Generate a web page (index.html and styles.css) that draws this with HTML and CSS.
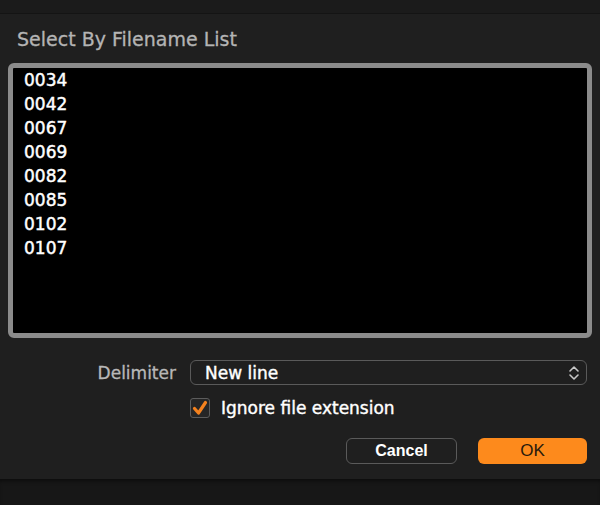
FILE: index.html
```html
<!DOCTYPE html>
<html>
<head>
<meta charset="utf-8">
<link rel="stylesheet" href="styles.css">
</head>
<body>
<div class="topbar"></div>
<div class="dialog">
  <div class="title">Select By Filename List</div>
  <div class="listbox">
    <div class="list">0034
0042
0067
0069
0082
0085
0102
0107</div>
  </div>
  <div class="form">
    <div class="row">
      <div class="label">Delimiter</div>
      <div class="select">
        <span>New line</span>
        <svg class="chev" width="12" height="20" viewBox="0 0 12 20">
          <path d="M2 8 L6 4 L10 8" fill="none" stroke="#c8c8c8" stroke-width="1.6" stroke-linecap="round" stroke-linejoin="round"/>
          <path d="M2 12 L6 16 L10 12" fill="none" stroke="#c8c8c8" stroke-width="1.6" stroke-linecap="round" stroke-linejoin="round"/>
        </svg>
      </div>
    </div>
    <div class="row">
      <div class="label"></div>
      <div class="check">
        <span class="box">
          <svg width="20" height="20" viewBox="0 0 20 20">
            <path d="M4.5 10.5 L8.5 15 L15.5 4.5" fill="none" stroke="#f5821e" stroke-width="3.2" stroke-linecap="round" stroke-linejoin="round"/>
          </svg>
        </span>
        <span class="check-label">Ignore file extension</span>
      </div>
    </div>
    <div class="buttons">
      <div class="btn cancel">Cancel</div>
      <div class="btn ok">OK</div>
    </div>
  </div>
</div>
<div class="footer"></div>
</body>
</html>
```
FILE: styles.css
```css
html, body {
  margin: 0;
  padding: 0;
  background: #171717;
  width: 600px;
  height: 505px;
  overflow: hidden;
  font-family: "DejaVu Sans", "Liberation Sans", sans-serif;
}
.topbar {
  height: 13px;
  background: #1b1b1b;
  border-bottom: 1px solid #141414;
}
.dialog {
  height: 465px;
  background: #1f1f1f;
  padding: 0 8px 0 8px;
  box-sizing: border-box;
  display: flex;
  flex-direction: column;
}
.title {
  color: #b4b4b4;
  font-size: 19px;
  line-height: 22px;
  padding: 14px 0 0 9px;
  height: 49px;
  box-sizing: border-box;
  -webkit-text-stroke: 0.3px #b4b4b4;
}
.listbox {
  height: 275px;
  border: 5px solid #8b8b8b;
  border-radius: 6px;
  background: #000;
  box-sizing: border-box;
  padding: 0 0 0 11px;
}
.list {
  white-space: pre;
  color: #fff;
  font-size: 17px;
  line-height: 24px;
  padding-top: 0;
  -webkit-text-stroke: 0.45px #fff;
}
.form {
  display: flex;
  flex-direction: column;
  padding: 22px 5px 0 0;
}
.row {
  display: grid;
  grid-template-columns: 182px 1fr;
  align-items: center;
}
.row + .row {
  margin-top: 13px;
}
.label {
  color: #b8b8b8;
  font-size: 17px;
  text-align: right;
  padding-right: 14px;
  -webkit-text-stroke: 0.3px #b8b8b8;
}
.select {
  height: 25px;
  border: 1px solid #5a5a5a;
  border-radius: 6px;
  box-sizing: border-box;
  display: flex;
  align-items: center;
  justify-content: space-between;
  padding: 0 6px 0 14px;
  color: #fff;
  font-size: 17px;
  -webkit-text-stroke: 0.4px #fff;
}
.chev {
  display: block;
  -webkit-text-stroke: 0;
}
.check {
  display: flex;
  align-items: center;
  gap: 11px;
}
.box {
  width: 20px;
  height: 20px;
  border: 1px solid #5c5c5c;
  border-radius: 3px;
  box-sizing: border-box;
  background: #262626;
  display: flex;
  align-items: center;
  justify-content: center;
}
.box svg {
  display: block;
  margin: -1px;
}
.check-label {
  color: #fff;
  font-size: 17px;
  -webkit-text-stroke: 0.4px #fff;
}
.buttons {
  display: flex;
  justify-content: flex-end;
  gap: 21px;
  margin-top: 20px;
}
.btn {
  height: 26px;
  border-radius: 6px;
  box-sizing: border-box;
  display: flex;
  align-items: center;
  justify-content: center;
  font-size: 15px;
}
.cancel {
  width: 111px;
  border: 1.5px solid #5a5a5a;
  color: #fff;
  font-weight: bold;
  font-family: "Liberation Sans", sans-serif;
  font-size: 16px;
}
.ok {
  width: 109px;
  background: #fd8a1c;
  color: #2a1a0c;
  font-family: "Liberation Sans", sans-serif;
  font-size: 17px;
}
.footer {
  height: 26px;
  background: #171717;
  box-shadow: inset 0 4px 4px -2px rgba(0,0,0,0.5);
}
```
